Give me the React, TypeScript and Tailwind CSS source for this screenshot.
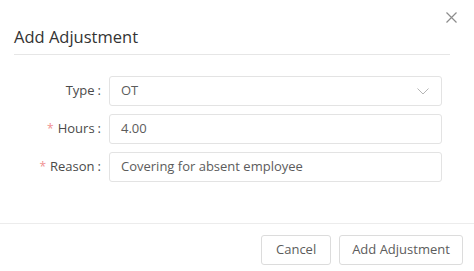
import React from "react";

const font = { fontFamily: '"Open Sans", "Noto Sans", sans-serif' };

function Row({ label, required, children }: { label: string; required?: boolean; children: React.ReactNode }) {
  return (
    <div className="flex items-center h-[30px]">
      <div className="w-[101px] flex justify-end items-center text-[13px] text-[#4a4a4a]">
        {required && <span className="text-[#f09090] mr-[4px] text-[12px]">*</span>}
        <span>{label}</span>
        <span className="ml-[3px]">:</span>
      </div>
      <div className="ml-[8px] w-[333px] h-[30px] border border-[#e3e3e3] rounded-[3px] flex items-center pl-[11px] pr-[12px] text-[13px] text-[#5c5c5c]">
        {children}
      </div>
    </div>
  );
}

export default function App() {
  return (
    <div className="w-[474px] h-[271px] bg-white relative overflow-hidden" style={font}>
      <button className="absolute right-[17px] top-[12px] text-[#999]">
        <svg width="11" height="11" viewBox="0 0 11 11" fill="none" stroke="#8c8c8c" strokeWidth="1.2">
          <path d="M0.5 0.5 L10.5 10.5 M10.5 0.5 L0.5 10.5" />
        </svg>
      </button>
      <div className="pl-[14px] pr-[24px] pt-[25px]">
        <div className="text-[16.5px] text-[#333] leading-[24px] pb-[5px] border-b border-[#e6e6e6]">Add Adjustment</div>
      </div>
      <div className="flex flex-col gap-[8px] pt-[21px]">
        <Row label="Type">
          <span className="flex-1">OT</span>
          <svg width="12" height="7" viewBox="0 0 12 7" fill="none" stroke="#b5b5b5" strokeWidth="1">
            <path d="M0.5 0.5 L6 6 L11.5 0.5" />
          </svg>
        </Row>
        <Row label="Hours" required>4.00</Row>
        <Row label="Reason" required>Covering for absent employee</Row>
      </div>
      <div className="absolute left-0 right-0 top-[223px] border-t border-[#ececec] flex justify-end gap-[8px] pt-[11px] pr-[11px]">
        <button className="h-[30px] px-[14px] border border-[#dcdcdc] rounded-[3px] text-[13px] text-[#5c5c5c] w-[70px]">Cancel</button>
        <button className="h-[30px] px-[12px] border border-[#dcdcdc] rounded-[3px] text-[13px] text-[#5c5c5c] w-[124px]">Add Adjustment</button>
      </div>
    </div>
  );
}
